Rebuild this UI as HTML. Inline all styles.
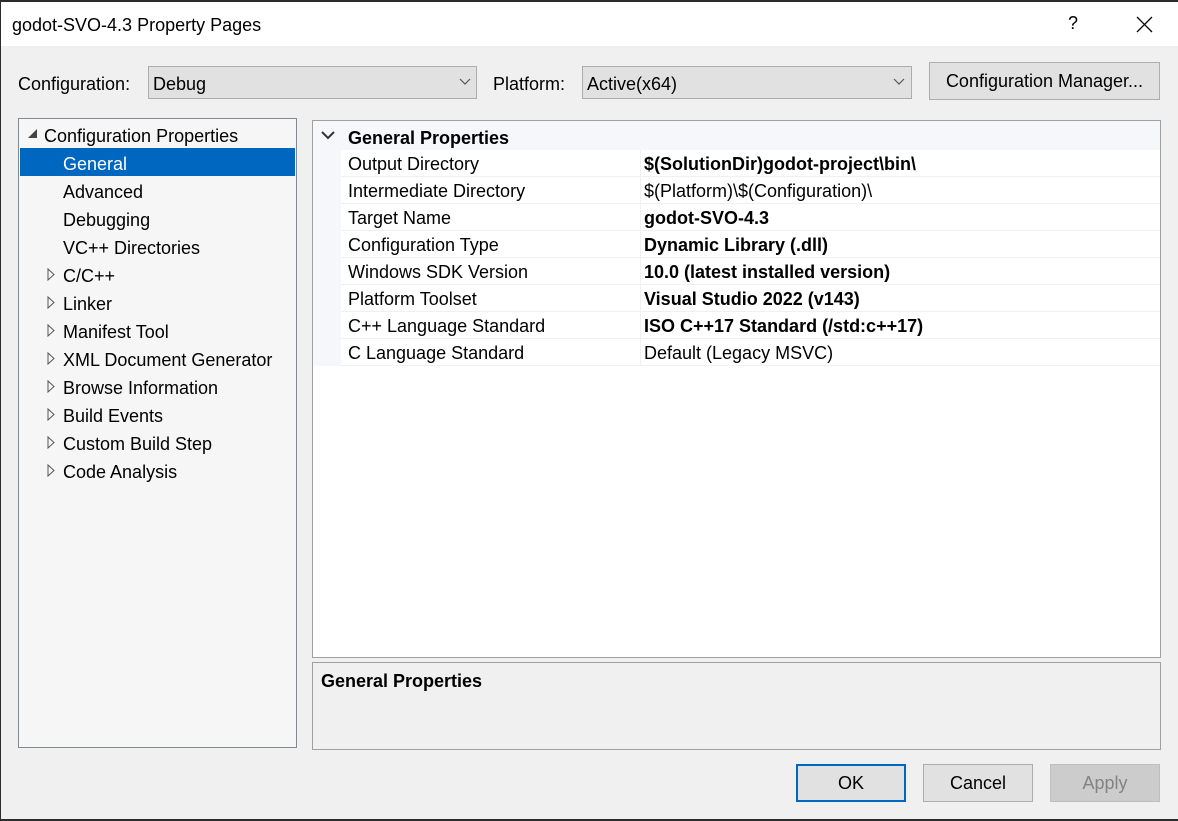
<!DOCTYPE html>
<html><head><meta charset="utf-8"><style>
*{margin:0;padding:0;box-sizing:border-box}
body{width:1178px;height:821px;overflow:hidden;background:#f0f0f0;font-family:"Liberation Sans",sans-serif;font-size:18px;color:#000;position:relative}
.a{position:absolute}
.t{white-space:nowrap;line-height:20px}
.combo{position:absolute;background:#e1e1e1;border:1px solid #adadad;height:33px}
.combo span{position:absolute;left:4px;top:7px;line-height:20px}
.chev{position:absolute;top:11px;width:12px;height:8px}
.btn{position:absolute;background:#e1e1e1;border:1px solid #adadad;text-align:center;line-height:34px}
.tri{position:absolute;width:0;height:0}
.row{position:absolute;left:341px;width:819px;height:27px;border-bottom:1px solid #f0f0f0;background:#fff}
.row .n{position:absolute;left:7px;top:4px}
.row .sep{position:absolute;left:299px;top:0;width:1px;height:27px;background:#f0f0f0}
b{font-weight:bold}
</style></head><body>
<div class="a" style="left:0;top:0;width:1178px;height:2px;background:#2b2b2b"></div>
<div class="a" style="left:0;top:0;width:1px;height:821px;background:#2b2b2b"></div>
<div class="a" style="left:0;top:819px;width:1178px;height:2px;background:#2b2b2b"></div>
<div class="a" style="left:1px;top:2px;width:1177px;height:44px;background:#fff"></div>
<div class="a t" style="left:12px;top:15px">godot-SVO-4.3 Property Pages</div>
<div class="a t" style="left:1068px;top:13px;font-size:18px">?</div>
<svg class="a" style="left:1136px;top:16px" width="17" height="17"><path d="M1 1L16 16M16 1L1 16" stroke="#000" stroke-width="1.3"/></svg>

<div class="a t" style="left:18px;top:74px">Configuration:</div>
<div class="combo" style="left:148px;top:66px;width:329px"><span>Debug</span><svg class="chev" style="left:310px" viewBox="0 0 12 8"><path d="M1 1L6 6L11 1" fill="none" stroke="#555" stroke-width="1.2"/></svg></div>
<div class="a t" style="left:493px;top:74px">Platform:</div>
<div class="combo" style="left:582px;top:66px;width:330px"><span>Active(x64)</span><svg class="chev" style="left:310px" viewBox="0 0 12 8"><path d="M1 1L6 6L11 1" fill="none" stroke="#555" stroke-width="1.2"/></svg></div>
<div class="btn" style="left:929px;top:62px;width:231px;height:38px;line-height:37px">Configuration Manager...</div>

<div class="a" style="left:18px;top:118px;width:279px;height:630px;background:#f6f6f6;border:1px solid #828790"></div>
<div class="a" style="left:20px;top:148px;width:275px;height:28px;background:#0067c0"></div>
<div class="tri" style="left:28px;top:129px;border-left:9px solid transparent;border-bottom:9px solid #444"></div>
<div class="a t" style="left:44px;top:126px">Configuration Properties</div>
<div class="a t" style="left:63px;top:154px;color:#fff">General</div>
<div class="a t" style="left:63px;top:182px">Advanced</div>
<div class="a t" style="left:63px;top:210px">Debugging</div>
<div class="a t" style="left:63px;top:238px">VC++ Directories</div>
<div id="tr"></div>
<script>
var items=["C/C++","Linker","Manifest Tool","XML Document Generator","Browse Information","Build Events","Custom Build Step","Code Analysis"];
var h="";items.forEach(function(s,i){var y=266+28*i;
h+='<svg class="a" style="left:47px;top:'+(y+2)+'px" width="8" height="13"><path d="M1 1L7 6.5L1 12Z" fill="none" stroke="#555" stroke-width="1"/></svg><div class="a t" style="left:63px;top:'+y+'px">'+s+'</div>';});
document.getElementById("tr").outerHTML=h;
</script>

<div class="a" style="left:312px;top:120px;width:849px;height:538px;background:#fff;border:1px solid #a0a0a0"></div>
<div class="a" style="left:313px;top:121px;width:847px;height:29px;background:#f5f7fb"></div>
<div class="a" style="left:313px;top:150px;width:28px;height:216px;background:#f5f7fb"></div>
<svg class="a" style="left:321px;top:131px" width="14" height="9"><path d="M1 1L7 7L13 1" fill="none" stroke="#333" stroke-width="2"/></svg>
<div class="a t" style="left:348px;top:128px"><b>General Properties</b></div>
<div id="rows"></div>
<script>
var r=[["Output Directory","$(SolutionDir)godot-project\\bin\\",1],["Intermediate Directory","$(Platform)\\$(Configuration)\\",0],["Target Name","godot-SVO-4.3",1],["Configuration Type","Dynamic Library (.dll)",1],["Windows SDK Version","10.0 (latest installed version)",1],["Platform Toolset","Visual Studio 2022 (v143)",1],["C++ Language Standard","ISO C++17 Standard (/std:c++17)",1],["C Language Standard","Default (Legacy MSVC)",0]];
var h="";r.forEach(function(x,i){var y=150+27*i;
h+='<div class="row" style="top:'+y+'px"><div class="n t">'+x[0]+'</div><div class="sep"></div><div class="t" style="position:absolute;left:303px;top:4px">'+(x[2]?'<b>'+x[1]+'</b>':x[1])+'</div></div>';});
document.getElementById("rows").outerHTML=h;
</script>

<div class="a" style="left:312px;top:662px;width:849px;height:88px;border:1px solid #a0a0a0;background:#f0f0f0"></div>
<div class="a t" style="left:321px;top:671px"><b>General Properties</b></div>

<div class="btn" style="left:796px;top:764px;width:110px;height:38px;border:2px solid #0067c0;line-height:35px">OK</div>
<div class="btn" style="left:923px;top:764px;width:110px;height:38px;line-height:37px">Cancel</div>
<div class="btn" style="left:1050px;top:764px;width:110px;height:38px;line-height:37px;background:#cccccc;border-color:#bfbfbf;color:#838383">Apply</div>
</body></html>
